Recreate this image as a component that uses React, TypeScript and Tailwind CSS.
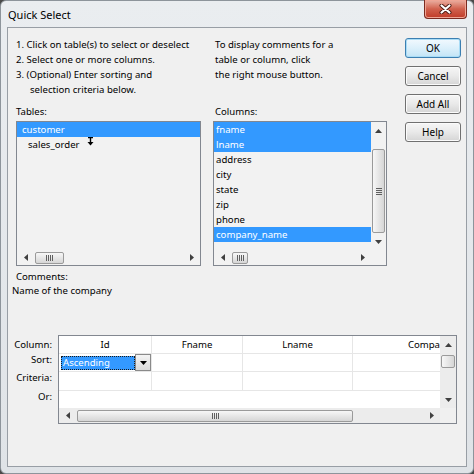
import type { ReactNode } from 'react';

function Tri({ dir }: { dir: 'up' | 'down' | 'left' | 'right' }) {
  const pts =
    dir === 'up' ? '0,4 7,4 3.5,0' : dir === 'down' ? '0,0 7,0 3.5,4' : dir === 'left' ? '4,0 4,7 0,3.5' : '0,0 0,7 4,3.5';
  const w = dir === 'up' || dir === 'down' ? 7 : 4;
  const h = dir === 'up' || dir === 'down' ? 4 : 7;
  return (
    <svg width={w} height={h} viewBox={`0 0 ${w} ${h}`}>
      <polygon points={pts} fill="#404040" />
    </svg>
  );
}

function Grip({ vertical }: { vertical?: boolean }) {
  return (
    <div className={`flex ${vertical ? 'flex-col gap-[1px]' : 'gap-[1px]'}`}>
      {[0, 1, 2, 3].map((i) => (
        <div key={i} className={vertical ? 'h-[1px] w-[6px] bg-[#5f5f5f]' : 'w-[1px] h-[6px] bg-[#5f5f5f]'} />
      ))}
    </div>
  );
}

function HScroll({ thumbLeft, thumbW, track = 'bg-[#ececec]' }: { thumbLeft: number; thumbW: number; track?: string }) {
  return (
    <div className={`flex h-[15px] items-center ${track}`}>
      <div className="w-[17px] h-full flex items-center justify-center">
        <Tri dir="left" />
      </div>
      <div className="flex-1 h-full relative">
        <div
          className="absolute top-[2px] h-[12px] rounded-[2px] border border-[#9a9a9a] bg-gradient-to-b from-[#f7f7f7] to-[#d6d6d6] flex items-center justify-center"
          style={{ left: thumbLeft, width: thumbW }}
        >
          <Grip />
        </div>
      </div>
      <div className="w-[17px] h-full flex items-center justify-center">
        <Tri dir="right" />
      </div>
    </div>
  );
}

function VScroll({ thumbTop, thumbH, track = 'bg-[#ececec]' }: { thumbTop: number; thumbH: number; track?: string }) {
  return (
    <div className={`flex flex-col w-full h-full items-center ${track}`}>
      <div className="h-[17px] w-full flex items-center justify-center">
        <Tri dir="up" />
      </div>
      <div className="flex-1 w-full relative">
        <div
          className="absolute left-[1px] right-[1px] rounded-[2px] border border-[#9a9a9a] bg-gradient-to-r from-[#f7f7f7] to-[#d6d6d6] flex items-center justify-center"
          style={{ top: thumbTop, height: thumbH }}
        >
          {thumbH > 20 && <Grip vertical />}
        </div>
      </div>
      <div className="h-[17px] w-full flex items-center justify-center">
        <Tri dir="down" />
      </div>
    </div>
  );
}

function Btn({ children, primary }: { children: ReactNode; primary?: boolean }) {
  return (
    <div
      className={`h-[20px] w-[56px] rounded-[3px] border flex items-center justify-center text-[10px] ${
        primary
          ? 'border-[#3c7fb1] bg-gradient-to-b from-[#f2f9fe] via-[#dcf0fb] to-[#c2e4f6] shadow-[inset_0_0_0_1px_#a9dcf6]'
          : 'border-[#707070] bg-gradient-to-b from-[#f6f6f6] via-[#e9e9e9] to-[#d5d5d5] shadow-[inset_0_0_0_1px_#fbfbfb]'
      }`}
    >
      {children}
    </div>
  );
}

function Row({ children, sel, indent = 'pl-[2px]' }: { children: ReactNode; sel?: boolean; indent?: string }) {
  return (
    <div className={`h-[15px] leading-[15px] whitespace-nowrap ${indent} ${sel ? 'bg-[#3399ff] text-white' : ''}`}>{children}</div>
  );
}

export default function App() {
  return (
    <div className="w-[474px] h-[474px] bg-[#4a4a4a] font-['Noto_Sans',sans-serif] text-[9.6px] text-black">
      <div className="w-full h-full rounded-[6px] border border-[#8d949b] bg-gradient-to-b from-[#eaedf0] to-[#dfe3e7] flex flex-col">
        {/* title bar */}
        <div className="h-[26px] flex items-start">
          <div className="flex-1 pl-[7px] mt-[6px] text-[11px] leading-[15px]">Quick Select</div>
          <div className="mr-[6px] -mt-[1px] w-[43px] h-[19px] rounded-b-[4px] border border-t-0 border-[#7a2a20] bg-gradient-to-b from-[#eab0a3] via-[#d0604d] to-[#c03a26] shadow-[inset_0_0_0_1px_#efa595] flex items-center justify-center">
            <svg width="13" height="10" viewBox="0 0 13 10">
              <path d="M2.5 1.5 L10.5 8.5 M10.5 1.5 L2.5 8.5" stroke="#4a1a12" strokeWidth="4" strokeLinecap="round" />
              <path d="M2.5 1.5 L10.5 8.5 M10.5 1.5 L2.5 8.5" stroke="#ffffff" strokeWidth="2.2" strokeLinecap="round" />
            </svg>
          </div>
        </div>

        {/* client area */}
        <div className="mx-[6px] h-[440px] border border-[#989ea5] bg-[#f0f0f0] flex flex-col">
          <div className="flex pt-[9px] pl-[8px]">
            {/* left column */}
            <div className="w-[185px] flex flex-col">
              <div className="h-[60px] leading-[15px] whitespace-nowrap">
                <div>1. Click on table(s) to select or deselect</div>
                <div>2. Select one or more columns.</div>
                <div>3. (Optional) Enter sorting and</div>
                <div className="pl-[14px]">selection criteria below.</div>
              </div>
              <div className="mt-[7px] h-[15px] leading-[15px]">Tables:</div>
              <div className="mt-[2px] h-[145px] border border-[#828790] bg-[#f2f2f2] flex flex-col">
                <div className="flex-1 relative">
                  <Row sel indent="pl-[5px]">customer</Row>
                  <Row indent="pl-[11px]">sales_order</Row>
                  <svg className="absolute left-[70px] top-[15px]" width="7" height="9" viewBox="0 0 7 9">
                    <path d="M1 0.5 H6 M3.5 0.5 V6" stroke="#000" strokeWidth="1.4" />
                    <polygon points="0.5,5 6.5,5 3.5,8.5" fill="#000" />
                  </svg>
                </div>
                <HScroll thumbLeft={1} thumbW={29} track="bg-[#f2f2f2]" />
              </div>
            </div>

            {/* middle column */}
            <div className="ml-[12px] w-[174px] flex flex-col">
              <div className="h-[60px] leading-[15px] whitespace-nowrap pl-[2px]">
                <div>To display comments for a</div>
                <div>table or column, click</div>
                <div>the right mouse button.</div>
              </div>
              <div className="mt-[7px] h-[15px] leading-[15px] pl-[2px]">Columns:</div>
              <div className="mt-[2px] h-[145px] border border-[#828790] bg-[#f2f2f2] flex flex-col">
                <div className="flex-1 flex">
                  <div className="flex-1">
                    <Row sel>fname</Row>
                    <Row sel>lname</Row>
                    <Row>address</Row>
                    <Row>city</Row>
                    <Row>state</Row>
                    <Row>zip</Row>
                    <Row>phone</Row>
                    <Row sel>company_name</Row>
                  </div>
                  <div className="w-[15px]">
                    <VScroll thumbTop={10} thumbH={84} track="bg-[#f2f2f2]" />
                  </div>
                </div>
                <div className="flex">
                  <div className="flex-1">
                    <HScroll thumbLeft={1} thumbW={16} track="bg-[#f2f2f2]" />
                  </div>
                  <div className="w-[15px] bg-[#f2f2f2]" />
                </div>
              </div>
            </div>

            {/* buttons */}
            <div className="ml-[18px] pt-[1px] flex flex-col gap-[8px]">
              <Btn primary>OK</Btn>
              <Btn>Cancel</Btn>
              <Btn>Add All</Btn>
              <Btn>Help</Btn>
            </div>
          </div>

          {/* comments */}
          <div className="mt-[4px] leading-[14px]">
            <div className="pl-[8px]">Comments:</div>
            <div className="pl-[4px]">Name of the company</div>
          </div>

          {/* criteria grid */}
          <div className="mt-[37px] pl-[2px] flex">
            <div className="w-[42px] flex flex-col items-end leading-[15px]">
              <div className="mt-[2px]">Column:</div>
              <div>Sort:</div>
              <div className="mt-[3px]">Criteria:</div>
              <div className="mt-[4px]">Or:</div>
            </div>
            <div className="ml-[6px] w-[399px] h-[89px] border border-[#828790] bg-white flex flex-col">
              <div className="h-[72px] flex">
                <div className="flex-1 flex flex-col">
                  <div className="h-[18px] flex border-b border-[#e6e6e6] leading-[17px]">
                    <div className="w-[93px] border-r border-[#e6e6e6] text-center">Id</div>
                    <div className="w-[91px] border-r border-[#e6e6e6] text-center">Fname</div>
                    <div className="w-[110px] border-r border-[#e6e6e6] text-center">Lname</div>
                    <div className="flex-1 text-right overflow-hidden whitespace-nowrap">Compa</div>
                  </div>
                  <div className="h-[18px] flex border-b border-[#e6e6e6]">
                    <div className="w-[93px] border-r border-[#e6e6e6] pl-[2px] flex items-center">
                      <div className="w-[74px] h-[14px] bg-[#3399ff] border border-dotted border-[#1a1a1a] text-white leading-[12px] pl-[1px]">
                        Ascending
                      </div>
                      <div className="w-[16px] h-[17px] border border-[#8a8a8a] bg-gradient-to-b from-[#f4f4f4] to-[#dadada] flex items-center justify-center">
                        <svg width="7" height="4" viewBox="0 0 7 4">
                          <polygon points="0,0 7,0 3.5,4" fill="#000" />
                        </svg>
                      </div>
                    </div>
                    <div className="w-[91px] border-r border-[#e6e6e6]" />
                    <div className="w-[110px] border-r border-[#e6e6e6]" />
                    <div className="flex-1" />
                  </div>
                  <div className="h-[19px] flex border-b border-[#e6e6e6]">
                    <div className="w-[93px] border-r border-[#e6e6e6]" />
                    <div className="w-[91px] border-r border-[#e6e6e6]" />
                    <div className="w-[110px] border-r border-[#e6e6e6]" />
                    <div className="flex-1" />
                  </div>
                  <div className="flex-1" />
                </div>
                <div className="w-[16px]">
                  <VScroll thumbTop={2} thumbH={13} />
                </div>
              </div>
              <div className="flex">
                <div className="flex-1">
                  <HScroll thumbLeft={1} thumbW={276} />
                </div>
                <div className="w-[16px] bg-[#f0f0f0]" />
              </div>
            </div>
          </div>
        </div>
      </div>
    </div>
  );
}
